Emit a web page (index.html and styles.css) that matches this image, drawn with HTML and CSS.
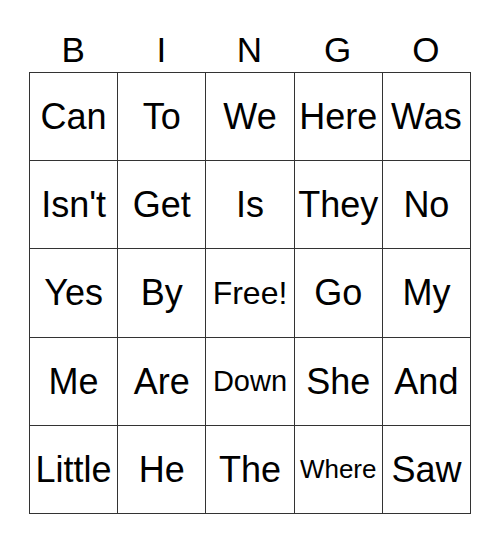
FILE: index.html
```html
<!DOCTYPE html>
<html>
<head>
<meta charset="utf-8">
<link rel="stylesheet" href="styles.css">
</head>
<body>
<div class="card">
  <div class="head">
    <div>B</div><div>I</div><div>N</div><div>G</div><div>O</div>
  </div>
  <div class="grid">
    <div class="cell">Can</div><div class="cell">To</div><div class="cell">We</div><div class="cell">Here</div><div class="cell">Was</div>
    <div class="cell">Isn't</div><div class="cell">Get</div><div class="cell">Is</div><div class="cell">They</div><div class="cell">No</div>
    <div class="cell">Yes</div><div class="cell">By</div><div class="cell free">Free!</div><div class="cell">Go</div><div class="cell">My</div>
    <div class="cell">Me</div><div class="cell">Are</div><div class="cell down">Down</div><div class="cell">She</div><div class="cell">And</div>
    <div class="cell">Little</div><div class="cell">He</div><div class="cell">The</div><div class="cell where">Where</div><div class="cell">Saw</div>
  </div>
</div>
</body>
</html>
```
FILE: styles.css
```css
html, body {
  margin: 0;
  padding: 0;
  background: #fff;
}
body {
  width: 500px;
  height: 544px;
  font-family: "Liberation Sans", Arial, sans-serif;
  color: #000;
}
.card {
  padding: 28px 0 0 29px;
}
.head {
  display: grid;
  grid-template-columns: repeat(5, 88.2px);
  height: 44px;
  font-size: 35px;
  line-height: 44px;
  text-align: center;
}
.grid {
  display: grid;
  grid-template-columns: repeat(5, 1fr);
  grid-template-rows: repeat(5, 1fr);
  gap: 1px;
  padding: 1px;
  width: 440px;
  height: 440px;
  background: #333;
}
.cell {
  background: #fff;
  display: flex;
  align-items: center;
  justify-content: center;
  font-size: 36px;
  padding-top: 1px;
  white-space: nowrap;
}
.cell.free { font-size: 32px; }
.cell.down { font-size: 29px; }
.cell.where { font-size: 26px; }
```
